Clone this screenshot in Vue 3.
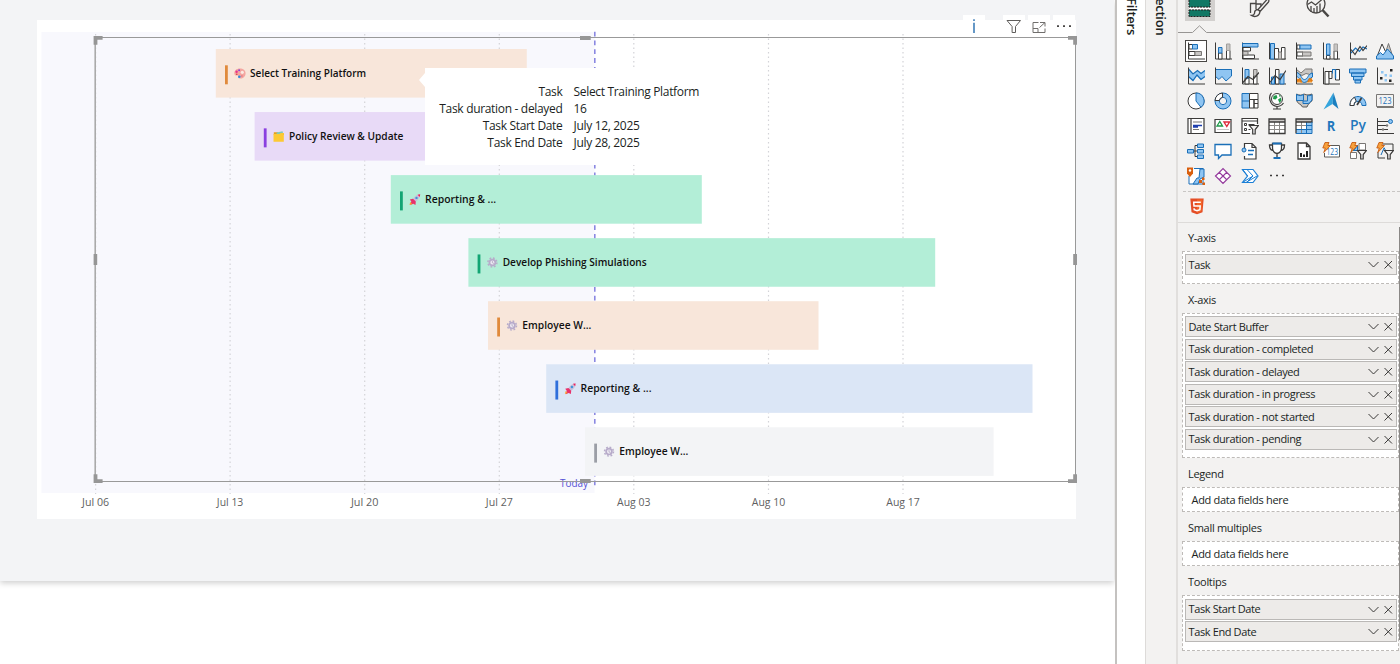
<template>
  <div class="workspace">
    <main class="canvas">
      <section class="page">
        <div class="visual">
          <svg class="chart" viewBox="0 0 1080 525" width="1080" height="525">
            <rect x="41.5" y="32" width="553" height="461" fill="#f8f8fd" />
            <line
              v-for="t in ticks" :key="'g' + t.label"
              :x1="t.x" :x2="t.x" y1="34" y2="494"
              stroke="#d3d3d8" stroke-width="1.2" stroke-dasharray="1.5 3"
            />
            <line x1="594.8" x2="594.8" y1="31.7" y2="489" stroke="#8a88e2" stroke-width="1.6" stroke-dasharray="4.8 4" />
            <text class="today" x="560" y="486.5" textLength="28" lengthAdjust="spacingAndGlyphs">Today</text>

            <g v-for="(b, i) in bars" :key="i" :transform="`translate(${b.x} ${49 + i * 63.05})`">
              <rect :width="b.w" height="48.6" :fill="b.fill" />
              <rect x="9.2" y="16.3" width="2.8" height="19" :fill="b.accent" />
              <g transform="translate(18.5 19)" v-html="emoji[b.icon]"></g>
              <text class="bar-label" x="34.3" y="28.2" :textLength="b.tw" lengthAdjust="spacingAndGlyphs">{{ b.label }}</text>
            </g>

            <text
              v-for="t in ticks" :key="t.label" class="tick"
              :x="t.x - t.tw / 2" y="506" :textLength="t.tw" lengthAdjust="spacingAndGlyphs"
            >{{ t.label }}</text>

            <!-- selection frame and its handles -->
            <path d="M95 37.5H1075.5V481.5H95" fill="none" stroke="#999" />
            <path d="M95.2 37V482" stroke="#aaa" stroke-width="1.6" />
            <g fill="#969696">
              <path d="M93.6 36h9v3.8h-5.2v5h-3.8z" />
              <path d="M1077 36h-9v3.8h5.2v5h3.8z" />
              <path d="M93.6 483h9v-3.8h-5.2v-5h-3.8z" />
              <path d="M1077 483h-9v-3.8h5.2v-5h3.8z" />
              <rect x="580" y="36" width="10.7" height="4" />
              <rect x="580" y="479" width="10.7" height="4" />
              <rect x="93.6" y="254" width="3.6" height="11" />
              <rect x="1073.2" y="254" width="3.8" height="11" />
            </g>
          </svg>

          <div class="visual-header">
            <span class="hbtn info"><svg viewBox="0 0 22 18" width="22" height="18"><path d="M11 4.3v1.8M11 7.8V18" stroke="#4a86bd" stroke-width="1.7" /></svg></span>
            <span class="hbtn"><svg viewBox="0 0 22 18" width="22" height="18"><path d="M4 5.5h13.5l-5 6V17.5h-3.4v-6z" fill="none" stroke="#605e5c" /></svg></span>
            <span class="hbtn"><svg viewBox="0 0 22 18" width="22" height="18"><path d="M10.5 7.500H5V17.500h12V13.500M5 13.500h5v4M12 7.500h5V11.500M17 7.500l-5.500 5" fill="none" stroke="#706e6c" /></svg></span>
            <span class="hbtn"><svg viewBox="0 0 22 18" width="22" height="18"><path d="M4 11.200h2M10 11.200h2M16 11.200h2" stroke="#484644" stroke-width="1.8" /></svg></span>
          </div>

          <div class="tooltip">
            <template v-for="row in tooltip" :key="row[0]">
              <span class="tip-key">{{ row[0] }}</span>
              <span class="tip-val">{{ row[1] }}</span>
            </template>
          </div>
        </div>
      </section>
    </main>

    <aside class="rail rail-filters"><span>Filters</span></aside>
    <aside class="rail rail-selection"><span>ection</span></aside>

    <aside class="panel">
      <div class="tabs">
        <span class="tab active">
          <svg viewBox="0 0 30 21" width="30" height="21">
            <rect x="4" y="-3" width="21" height="10" fill="#117865" stroke="#222" stroke-dasharray="2 1" />
            <rect x="4" y="10" width="21" height="6.5" fill="#117865" stroke="#222" stroke-dasharray="2 1" />
            <path d="M4 8.5h22" stroke="#fff" />
          </svg>
        </span>
        <span class="tab">
          <svg viewBox="0 0 30 21" width="30" height="21" fill="none" stroke="#484644" stroke-width="1.3">
            <path d="M7.500 13V3.500H13M13 9V-2M13 4h5v3" />
            <path d="M24 -.5L15 9.5l2 2L25.5 2c1-1.5 0-3-1.500-2.500zM15 9.500c-3 0-3.500 2.500-3.500 4-.5 1.500-2 2-3 2 3 2 8 1 8.500-4z" fill="#f3f2f1" />
          </svg>
        </span>
        <span class="tab">
          <svg viewBox="0 0 30 21" width="30" height="21" fill="none" stroke="#484644" stroke-width="1.3">
            <circle cx="14" cy="4" r="9" />
            <path d="M20.5 10l6 6.500" stroke-width="2.5" />
            <path d="M5.500 4.500l4-2.500 4 3 7-6" />
            <path d="M9 12V6M12 13V8M15 13V6M18 12V3.500" />
          </svg>
        </span>
      </div>
      <svg class="notch" viewBox="0 0 222 9" width="222" height="9">
        <path d="M0 7.500H14.500L21.500 .8L28.500 7.500H162" fill="none" stroke="#979593" />
      </svg>

      <div class="gallery">
        <span v-for="(icon, i) in icons" :key="i" class="cell" :class="{ picked: i === 0 }">
          <svg viewBox="0 0 18 18" width="18" height="18" fill="none" v-html="icon"></svg>
        </span>
      </div>
      <div class="custom">
        <svg viewBox="0 0 14 17" width="14" height="17">
          <path d="M.3 .5h13.400l-1.200 13.700L7 16.300l-5.500-2.100z" fill="#e44d26" />
          <path d="M7 1.500h5.500l-1 11.700L7 15z" fill="#f16529" />
          <path d="M10.800 4.200H3.700l.3 3.900h6.200l-.3 3.600L7 12.800l-2.800-1-.1-1.500" fill="none" stroke="#fff" stroke-width="1.5" />
        </svg>
      </div>

      <div class="wells">
        <section v-for="w in wells" :key="w.name" class="field">
          <h3>{{ w.name }}</h3>
          <div class="well" :class="{ empty: !w.items.length }">
            <div v-for="item in w.items" :key="item" class="pill">
              <span>{{ item }}</span>
              <svg viewBox="0 0 27 11" width="27" height="11" fill="none" stroke="#3b3a39">
                <path d="M1.500 3l5 5 5-5M17.500 2l7.500 7.500M25 2l-7.500 7.500" />
              </svg>
            </div>
            <p v-if="!w.items.length">Add data fields here</p>
          </div>
        </section>
      </div>
      <div class="scrollbar"></div>
    </aside>
  </div>
</template>

<script setup>
const ticks = [
  { label: 'Jul 06', x: 95.6, tw: 27 },
  { label: 'Jul 13', x: 230.1, tw: 26.5 },
  { label: 'Jul 20', x: 364.7, tw: 27.5 },
  { label: 'Jul 27', x: 499.3, tw: 27 },
  { label: 'Aug 03', x: 633.8, tw: 33.5 },
  { label: 'Aug 10', x: 768.5, tw: 33.5 },
  { label: 'Aug 17', x: 903, tw: 33.5 },
]

const bars = [
  { label: 'Select Training Platform', icon: 'palette', x: 215.8, w: 311, tw: 116, fill: '#f8e6da', accent: '#e08a3c' },
  { label: 'Policy Review & Update', icon: 'folder', x: 254.6, w: 311, tw: 114.5, fill: '#e8daf7', accent: '#8a3fe0' },
  { label: 'Reporting & ...', icon: 'rocket', x: 390.8, w: 311, tw: 71, fill: '#b3eed7', accent: '#12a573' },
  { label: 'Develop Phishing Simulations', icon: 'gear', x: 468.4, w: 466.8, tw: 144, fill: '#b3eed7', accent: '#12a573' },
  { label: 'Employee W...', icon: 'gear', x: 488, w: 330.5, tw: 69, fill: '#f8e6da', accent: '#e08a3c' },
  { label: 'Reporting & ...', icon: 'rocket', x: 546.2, w: 486.3, tw: 71, fill: '#dbe6f6', accent: '#2f6fdb' },
  { label: 'Employee W...', icon: 'gear', x: 585, w: 408.6, tw: 69, fill: '#f3f4f6', accent: '#9b9ea6' },
]

const tooltip = [
  ['Task', 'Select Training Platform'],
  ['Task duration - delayed', '16'],
  ['Task Start Date', 'July 12, 2025'],
  ['Task End Date', 'July 28, 2025'],
]

const wells = [
  { name: 'Y-axis', items: ['Task'] },
  {
    name: 'X-axis',
    items: [
      'Date Start Buffer',
      'Task duration - completed',
      'Task duration - delayed',
      'Task duration - in progress',
      'Task duration - not started',
      'Task duration - pending',
    ],
  },
  { name: 'Legend', items: [] },
  { name: 'Small multiples', items: [] },
  { name: 'Tooltips', items: ['Task Start Date', 'Task End Date'] },
]

// 11x11 pictograms in front of the task names
const emoji = {
  palette: `<path d="M5.5 .5C2 .5 0 2.800 0 5.300c0 2.200 1.500 2.500 2.800 2.200 1.200-.2 1.500.6 1.200 1.400-.3 1 .8 1.600 2 1.600 3 0 5.300-2.200 5.300-5.300C11.300 2.200 8.800 .5 5.500 .5z" fill="#f4a6a0"/>
    <circle cx="2.3" cy="3.8" r="1.2" fill="#e8308a"/><circle cx="4.8" cy="2.3" r="1" fill="#8a45d8"/><circle cx="2.5" cy="6.3" r=".8" fill="#d8323c"/><circle cx="5" cy="8.700" r="1.3" fill="#2f8be0"/><circle cx="8" cy="4.300" r="1.600" fill="#fbeae2"/><circle cx="7.600" cy="8" r=".8" fill="#e36a78"/>`,
  folder: `<path d="M.7 1.200h4l1 1h5V4H.7z" fill="#e5a01c"/><path d="M3.500 1.500L9.500 .3l.5 3H3.500z" fill="#7fcab8"/><path d="M.4 3h6l1.300-1h3v8.800H.4z" fill="#fcc934"/>`,
  rocket: `<path d="M10.700 .2c-3-.2-5.500 2-7 5L6 7.700c3-1.700 5-4.200 4.700-7.500z" fill="#c9bdd8"/><path d="M8.300 .6L10.900 .2 10.500 2.900z" fill="#f0205a"/><path d="M3.700 4.700L.5 5.500l1.500 2L1 11l3-1.300 2.200 1.100L6.500 7.400z" fill="#e8326c"/><path d="M.2 10.800l.8-3 2 2z" fill="#ff9b28"/><circle cx="7.200" cy="3.800" r="1.200" fill="#3c96dc"/>`,
  gear: `<circle cx="5.5" cy="5.300" r="4.500" fill="none" stroke="#b7acca" stroke-width="1.500" stroke-dasharray="1.770 1.770"/><circle cx="5.500" cy="5.300" r="2.900" fill="#ece8f2" stroke="#b7abca" stroke-width="1.700"/><path d="M5.500 3.800v1.800l1.500 .8" fill="none" stroke="#9d92b0" stroke-width=".6"/>`,
}

const D = '#3b3a39'
const B = '#1a6fb8'
const L = '#8fc5f2'
const G = '#c8c6c4'
const axes = `<path d="M1.500 .5v16.500H18" stroke="${D}"/>`
const bolt = '<path d="M3 .5h4L5.800 3.500H8.500L1.800 10.500 3.300 6H.8z" fill="#f7a13c" stroke="#c75b12" stroke-width=".9"/>'
const funnel = `<path d="M8.500 8.500h9l-3.300 4v4.500h-2.500v-4.500z" fill="#f3f2f1" stroke="${D}" stroke-width="1.2"/>`

// visualization gallery, left to right, eight per row
const icons = [
  `${axes}<path d="M2 2.500h3.500v4.500H2zM2 9.500h6v4H2z" fill="#fff" stroke="${D}"/><path d="M5.500 2.500h5v4.500h-5z" fill="${L}" stroke="${B}"/><path d="M8 9.500h6.500v4H8z" fill="${G}" stroke="#797775"/>`,
  `${axes}<path d="M4.500 11h3.500v6H4.500zM12.500 8.500H16V17h-3.500z" fill="#fff" stroke="${D}"/><path d="M4.500 5.500h3.500V11H4.500z" fill="${L}" stroke="${B}"/><path d="M12.500 2H16v6.500h-3.500z" fill="${G}" stroke="#a19f9d"/>`,
  `${axes}<path d="M1.500 1.500h15.500v3.500H1.500z" fill="${L}" stroke="${B}"/><path d="M2 5.500h7.500v3.500H2zM2 13h11.500v3.500H2z" fill="#fff" stroke="${D}"/><path d="M2 9.500h5v3.500H2z" fill="${G}" stroke="#797775"/>`,
  `${axes}<path d="M2.500 1.500H6.500V17h-4z" fill="${L}" stroke="${B}"/><path d="M6.500 6.500h4V17h-4zM13.500 5.500H17V17h-3.500z" fill="#fff" stroke="${D}"/><path d="M10.500 10h3v7h-3z" fill="${G}" stroke="#797775"/>`,
  `${axes}<path d="M2 3h3v4H2zM2 10h6v4H2z" fill="#fff" stroke="${D}"/><path d="M5 3h11v4H5z" fill="${L}" stroke="${B}"/><path d="M7.500 10H16v4H7.500z" fill="${G}" stroke="#797775"/>`,
  `${axes}<path d="M4.500 13.500h3.500V17H4.500zM12 9h3.500v8H12z" fill="#fff" stroke="${D}"/><path d="M4.500 2h3.500v11H4.500z" fill="${L}" stroke="${B}"/><path d="M12 2h3.500v7H12z" fill="${G}" stroke="#a19f9d"/>`,
  `${axes}<path d="M2 11l4.500-5 4 3.500L14 5l4 2" stroke="${B}" stroke-width="1.2"/><path d="M2 7.500l4 5 5-8 3 4 4-5" stroke="${D}" stroke-width="1.2"/>`,
  `<path d="M12.500 1.500l5 15h-10z" fill="${G}" stroke="#797775"/><path d="M.5 16L6 2l6.500 14z" fill="#fff" stroke="${D}"/><path d="M.5 17v-3l4-3.500 2.500 2.500 4.500-6 6 7V17z" fill="${L}" stroke="${B}"/>`,

  `<path d="M1.500 2.500l4.500 5 4.500-4 3.500 3 4-3v6.500l-4 3-4-4-4 5-4.500-4z" fill="${L}"/><path d="M1.500 2l4.500 5 4.500-3.500 3.500 3 4-3" stroke="${B}" stroke-width="1.200"/><path d="M1.500 9.500l4.500 4 4-5.500 4 4.500 4-3" stroke="${B}" stroke-width="1.200"/>${axes}`,
  `<path d="M1.500 2.500h16V9L12 14 8 9.500l-3 3-3.500-3z" fill="${L}" stroke="${B}"/>${axes}`,
  `${axes}<path d="M4 11h4v6H4zM12.500 9H16v8h-3.500z" fill="#fff" stroke="${D}"/><path d="M4 2.500h4V11H4z" fill="${L}" stroke="${B}"/><path d="M12.500 2.500H16V9h-3.500z" fill="${G}" stroke="#797775"/><path d="M2 15.500l5-6 5 3 6-7" stroke="${D}" stroke-width="1.300"/>`,
  `${axes}<path d="M3.500 10h3v7h-3z" fill="${L}" stroke="${B}"/><path d="M7.500 2.500h3.500V17H7.500z" fill="#fff" stroke="${D}"/><path d="M12 7h4v10h-4z" fill="${L}" stroke="${B}"/><path d="M2 15.500l5-7 5 4 6-9" stroke="${D}" stroke-width="1.200"/>`,
  `<path d="M2 11.500l6 3 9-4v5H2z" fill="#f2932e"/><path d="M1.500 2.500L6 6l4.500-4H17v6l-6-1.500-4 2-5.500-3z" fill="${G}" stroke="#797775"/><path d="M1.500 5.500C6 6 6 12.500 9.500 12.500S13 6.500 17.500 6v4c-3 .5-4.500 5.500-8 5.500S5 10.500 1.500 9.500z" fill="${L}" stroke="${B}"/><path d="M2 14l3-2 1.500 3.500M13 15l1.500-3 3 2" stroke="#e07b12" stroke-width="1.600"/>${axes}`,
  `${axes}<path d="M3 4.500h4V17H3zM13.500 2.500h4V13h-4z" fill="#fff" stroke="${D}"/><path d="M7 4.500h3v7H7z" fill="#fff" stroke="${D}"/><path d="M13.500 2.500v9" stroke="${B}" stroke-width="1.400"/><path d="M10 2.500h3.500M10.500 2.500v4" stroke="${B}"/>`,
  `<path d="M.5 2h16.500v4H.5zM2.500 6h12.500v3.500H2.500zM4.500 9.500h8.500V13H4.500zM6 13h5.500v3H6z" fill="${L}" stroke="${B}"/>`,
  `${axes}<path d="M4 10h2.500v2.500H4zM14 2h2.500v2.500H14zM13 12.500h2.500v2.500H13z" fill="#222"/><path d="M8.500 7H11v2.500H8.500zM13.500 7.500H16v2.500h-2.500zM5 4h2.500v2.500H5zM8.500 12H11v2.500H8.500z" fill="${L}"/>`,

  `<circle cx="9" cy="9" r="8" fill="#fff" stroke="${D}"/><path d="M9 1a8 8 0 0 1 5 14.300L9 9z" fill="${L}" stroke="${B}"/>`,
  `<circle cx="9" cy="9" r="6" stroke="${L}" stroke-width="4"/><circle cx="9" cy="9" r="8" stroke="${B}"/><circle cx="9" cy="9" r="3.700" stroke="${B}"/><path d="M1 8.500A8 8 0 0 1 8.500 1v4.300A4 4 0 0 0 5.300 8.500z" fill="#fff" stroke="${D}"/>`,
  `<path d="M1 1.500h7.500V16H1z" fill="${L}" stroke="${B}"/><path d="M1 9h7.500" stroke="${B}"/><path d="M8.500 1.500H17v6H8.500zM8.500 7.500H13V16H8.500zM13 7.500h4V16h-4zM13 11.500h4" fill="#fff" stroke="${D}"/>`,
  `<circle cx="9" cy="7" r="5.500" fill="#fff" stroke="${D}"/><path d="M5.500 4l3-1 1 2.500-2 2-2.500-.5zM10 7.500l3-2 .5 3-2 2.500zM11 2.500l2 1.500-1.500 1z" fill="#1f9a4a"/><path d="M3.500 .8C0 4.500 1.500 13.500 9 14.500c3.500 0 5-1.500 6.500-3.500M9 14.500V17M5 17h8" stroke="${D}" stroke-width="1.200"/>`,
  `<path d="M1.500 2c3 1.500 5 1.500 7.500 0 3 1.500 5 1 8 0v6.500c-1.500 2.500-4 3-5 6.500H7.500C6 11.500 2 12 1.500 8z" fill="${G}" stroke="#5b5a58"/><path d="M1.500 2.500c3 1.500 4.500 1.500 7 0V8.500H1.500zM12.500 3.500c2 .5 3 0 4.500-.7V8c-1.500 1.500-2 3-4 3.500H8V9h4.500z" fill="${L}" stroke="${B}"/>`,
  `<path d="M11.500 .5L1.500 17.500 10.500 12z" fill="#35a5dd"/><path d="M11.500 .5l5 16.500-6-5z" fill="#1a7fc0"/>`,
  `<path d="M1 13.500C1 1.500 17 1.500 17 13.500h-4c0-5.500-8-5.500-8 0z" fill="${L}" stroke="${B}"/><path d="M1 13.500C1 9 3 6.500 5.500 5.300l1.800 4C5.500 10 5 11.500 5 13.500z" fill="#fff" stroke="${D}"/><path d="M8 13l4.500-7" stroke="${D}" stroke-width="1.700"/>`,
  `<path d="M.5 2.500h17v12h-17zM1 15.500h17" stroke="#797775"/><text x="2.5" y="12" font-family="Open Sans, sans-serif" font-size="9" fill="${B}" textLength="13" lengthAdjust="spacingAndGlyphs">123</text>`,

  `<path d="M1 1.500h16v15H1zM4 1.500v15" fill="#fff" stroke="${D}" stroke-width="1.200"/><path d="M6 5h9M6 12.500h6" stroke="#797775"/><path d="M6 8.500h9M6 10h5" stroke="#1f3fae" stroke-width="1.300"/>`,
  `<path d="M1 2.500h16v13H1z" fill="#fff" stroke="${D}" stroke-width="1.200"/><path d="M3 9l2.800-4.500L8.500 9z" stroke="#1f9a4a" stroke-width="1.300"/><path d="M10 5h5.500l-2.700 4.500z" stroke="#e02b3c" stroke-width="1.400"/><path d="M3 12.500h12" stroke="${G}"/>`,
  `<path d="M16.500 7V1.500H1v15h8" fill="#fff" stroke="${D}" stroke-width="1.200"/><path d="M1 4h15.500" stroke="${D}"/><path d="M3.500 6.500h2v2h-2zM3.500 11.500h2v2h-2z" stroke="${D}"/><path d="M7.500 7.500h6M7.500 12.500h2" stroke="${D}"/>${funnel}`,
  `<path d="M1 2h16v14.500H1z" fill="#fff"/><path d="M1 2h16v3H1z" fill="${G}"/><path d="M1 8.500h16M1 12.500h16M6.500 5v11.500M11.500 5v11.500" stroke="#8a8886"/><path d="M1 2h16v14.500H1zM1 5h16" stroke="${D}" stroke-width="1.300"/>`,
  `<path d="M1 2h16v14.500H1z" fill="#fff"/><path d="M1 2h16v3H1z" fill="${G}"/><path d="M11.500 5H17v11.500H1V12.500h10.500z" fill="${L}"/><path d="M1 8.500h11M6.500 5v11.500" stroke="#8a8886"/><path d="M1 12.500h16M11.500 5v11.500M11.500 8.500H17" stroke="${B}"/><path d="M1 16.500V2h16v3H1" stroke="${D}" stroke-width="1.300"/><path d="M1 16.500h16V5" stroke="${B}"/>`,
  `<text x="4.8" y="14" font-family="Open Sans, sans-serif" font-size="14" font-weight="700" fill="#1f78bd" textLength="8.500" lengthAdjust="spacingAndGlyphs">R</text>`,
  `<text x="1" y="12.800" font-family="Open Sans, sans-serif" font-size="14" font-weight="600" fill="#1f78bd" textLength="16" lengthAdjust="spacingAndGlyphs">Py</text>`,
  `<path d="M1.500 1v16M1.500 16.500H18M2 12.500h10M2 8.500h8M2 4.500h10" stroke="${D}"/><circle cx="14.500" cy="4.500" r="2" fill="${L}" stroke="${B}"/><circle cx="11" cy="8.500" r="1.200" fill="#797775"/><circle cx="7" cy="12.500" r="1.200" fill="#797775"/>`,

  `<path d="M6 9h4M8 3.500v11M8 3.500h2.500M8 14.500h2.500" stroke="${D}"/><path d="M.5 7.500h6v3.500h-6zM10.500 2h6v3.500h-6zM10.500 7.500h6v3.500h-6zM10.500 13h6v3.500h-6z" fill="${L}" stroke="${B}"/>`,
  `<path d="M1 2.500h16v10.500H8L4.500 16.500V13H1z" fill="#fff" stroke="${B}" stroke-width="1.300"/>`,
  `<path d="M3.500 7V1.500h7.500l4 4V17H3.500v-3M11 1.500v4h4" fill="#fff" stroke="${D}" stroke-width="1.200"/><circle cx="3" cy="8" r="2" fill="${L}" stroke="${B}"/><path d="M7 8.500h6M7 12.500h5" stroke="${B}" stroke-width="1.500"/>`,
  `<path d="M4.500 1.500h9v4.500c0 3.500-2 5-4.500 5.500-2.500-.5-4.500-2-4.500-5.500zM4.500 3H1.500c0 4 1.500 5.500 4 5.500M13.500 3h3c0 4-1.500 5.500-4 5.500M9 11.500v4" fill="#fff" stroke="${D}" stroke-width="1.300"/><path d="M4.500 1.500h9M5.500 16h7" stroke="${B}" stroke-width="2"/>`,
  `<path d="M3 1h8.500l3.500 3.500V17H3zM11.500 1v3.500H15" fill="#fff" stroke="${D}" stroke-width="1.300"/><path d="M5 11h2v4H5zM8 12.500h2V15H8zM11 9h2v6h-2z" fill="#222"/>`,
  `<path d="M6 3.500h11.500v11.500H2.500V11" fill="#fff" stroke="#5b5a58"/><text x="4.500" y="12.700" font-family="Open Sans, sans-serif" font-size="8.500" fill="${B}" textLength="11.500" lengthAdjust="spacingAndGlyphs">123</text>${bolt}`,
  `<path d="M10 1.500h6.500V8H10zM1.500 10.500h6v6h-6z" fill="#fff" stroke="#797775"/><path d="M6 7l2.500-4v5.500H4z" fill="${L}" stroke="${B}"/>${funnel}${bolt}`,
  `<path d="M7 2h10v7M2 10v6h7" stroke="${D}"/><path d="M8 5.500l2.500 5M8 6l-3 7" stroke="${B}"/>${funnel}${bolt}`,

  `<path d="M2 9v8h14V1.500H7" fill="#fff" stroke="${B}"/><path d="M6 17l4-6h2l1-9h4v8l-4 2-2 5z" fill="${L}" stroke="${B}"/><path d="M0 .5h6v6L3 10 0 6.500z" fill="#d95f0e"/><circle cx="3" cy="3.500" r="1.200" fill="#fff"/><path d="M12 13h3v3h-3zM15 10.500h2.500v2.500H15zM15.500 15.500H18V18h-2.500z" fill="#d95f0e"/>`,
  `<path d="M5.300 5.300L9 1.500l3.700 3.800L9 9zM1.500 9l3.800-3.700L9 9l-3.700 3.700zM9 9l3.700-3.700L16.500 9l-3.800 3.700zM5.300 12.700L9 9l3.700 3.700L9 16.500z" fill="#fff" stroke="#953a9d" stroke-width="1.200"/>`,
  `<path d="M1.500 2.500h10.500L17 9l-5 6.500H1.500L6.500 9z" fill="#fff" stroke="#1b7fd6" stroke-width="1.200"/><path d="M6 2.500L12 9l-6.500 6.500M1.500 15.500L12 9M5 15.500L16 9M1.500 2.500L6.500 9" stroke="#1b7fd6"/>`,
  `<path d="M2 8.500h2M8 8.500h2M14 8.500h2" stroke="#3b3a39" stroke-width="1.600"/>`,
]
</script>

<style scoped>
.workspace {
  display: flex;
  width: 1400px;
  height: 664px;
  overflow: hidden;
  background: #fff;
  color: #201f1e;
  font-family: "Open Sans", "Noto Sans", sans-serif;
}

/* ===== report canvas ===== */
.canvas {
  width: 1115px;
  flex-shrink: 0;
  overflow: hidden;
}

.page {
  width: 1114px;
  height: 581px;
  background: #f3f4f6;
  box-shadow: 0 2px 6px rgba(0, 0, 0, 0.2);
  box-sizing: border-box;
  padding: 20px 0 0 37px;
}

.visual {
  position: relative;
  width: 1039px;
  height: 499px;
  background: #fff;
}

.chart {
  position: absolute;
  left: -37px;
  top: -20px;
}

.bar-label {
  font-size: 11px;
  font-weight: 600;
  fill: #111;
}

.tick {
  font-size: 11px;
  fill: #5f5f62;
}

.today {
  font-size: 11px;
  fill: #5350d6;
}

.visual-header {
  position: absolute;
  right: 1px;
  top: -5px;
  display: flex;
  gap: 3px;
}

.hbtn {
  width: 22px;
  height: 18px;
  background: #fff;
}

.hbtn.info {
  margin-right: 15px;
}

.hbtn svg {
  display: block;
}

.tooltip {
  position: absolute;
  left: 388px;
  top: 48px;
  width: 287px;
  height: 97px;
  box-sizing: border-box;
  padding-top: 15px;
  background: #fff;
  display: grid;
  grid-template-columns: 137.5px 1fr;
  grid-auto-rows: 17px;
  column-gap: 11px;
  font-size: 12px;
  line-height: 17px;
  letter-spacing: -0.32px;
  white-space: nowrap;
}

.tooltip::before {
  content: '';
  position: absolute;
  left: -6px;
  top: 5px;
  border: solid transparent;
  border-width: 7px 6px 7px 0;
  border-right-color: #fff;
}

.tip-key {
  text-align: right;
}

/* ===== collapsed panes ===== */
.rail {
  box-sizing: border-box;
  flex-shrink: 0;
}

.rail span {
  display: flex;
  justify-content: flex-end;
  height: 35px;
  writing-mode: vertical-rl;
  font-size: 13px;
  font-weight: 600;
  letter-spacing: -0.25px;
  line-height: 30px;
}

.rail-filters {
  width: 31px;
  border-left: 2px solid #c4c2c0;
  border-right: 1px solid #dddbd9;
}

.rail-selection {
  width: 32px;
  background: #f3f2f1;
  border-right: 2px solid #e1dfdd;
}

/* ===== visualizations pane ===== */
.panel {
  position: relative;
  width: 222px;
  flex-shrink: 0;
  background: #f3f2f1;
}

.tabs {
  display: flex;
  gap: 28.5px;
  padding-left: 6.5px;
  height: 25px;
}

.tab {
  width: 30px;
  height: 21px;
}

.tab svg {
  display: block;
}

.tab.active {
  background: #d2d0ce;
}

.notch {
  display: block;
}

.gallery {
  display: grid;
  grid-template-columns: repeat(8, 27px);
  grid-auto-rows: 25px;
  padding: 4.5px 0 0 4.5px;
  height: 157px;
  box-sizing: border-box;
}

.cell {
  display: flex;
  align-items: center;
  justify-content: center;
  box-sizing: border-box;
  width: 27px;
  height: 25px;
}

.cell.picked {
  width: 22px;
  height: 22px;
  margin: 1px 0 0 2.5px;
  border: 1px solid #484644;
  background: #fff;
}

.custom {
  margin-left: 5px;
  padding: 6px 0 0 6.5px;
  height: 32px;
  box-sizing: border-box;
  border-top: 1px dashed #c8c6c4;
  position: relative;
}

.custom::after {
  content: '';
  position: absolute;
  left: -5px;
  right: 0;
  bottom: 0;
  border-bottom: 1px solid #dddbd9;
}

.wells {
  margin-top: -1.5px;
  padding: 0 1px 0 3.5px;
}

.field h3 {
  margin: 0;
  padding: 5px 0 1px 6.5px;
  height: 23px;
  font-size: 11px;
  font-weight: 400;
  line-height: 22px;
  letter-spacing: -0.3px;
}

.well {
  box-sizing: border-box;
  border: 1px dashed #bebbb8;
  background: #fff;
  padding: 2.5px 1px 7.5px 2px;
  display: flex;
  flex-direction: column;
  gap: 1.5px;
  font-size: 11px;
}

.well.empty {
  height: 25px;
  padding: 0 0 0 9px;
}

.well p {
  margin: 0;
  line-height: 23px;
  letter-spacing: -0.3px;
}

.pill {
  display: flex;
  align-items: center;
  justify-content: space-between;
  height: 21px;
  box-sizing: border-box;
  padding: 0 2px 0 3px;
  border: 1px solid #bab8b6;
  background: #edebe9;
  line-height: 18px;
  letter-spacing: -0.38px;
  white-space: nowrap;
}

.scrollbar {
  position: absolute;
  right: 0;
  top: 227px;
  width: 1px;
  height: 413px;
  background: #8a8886;
}
</style>

<style>
body {
  margin: 0;
  overflow: hidden;
}
</style>
